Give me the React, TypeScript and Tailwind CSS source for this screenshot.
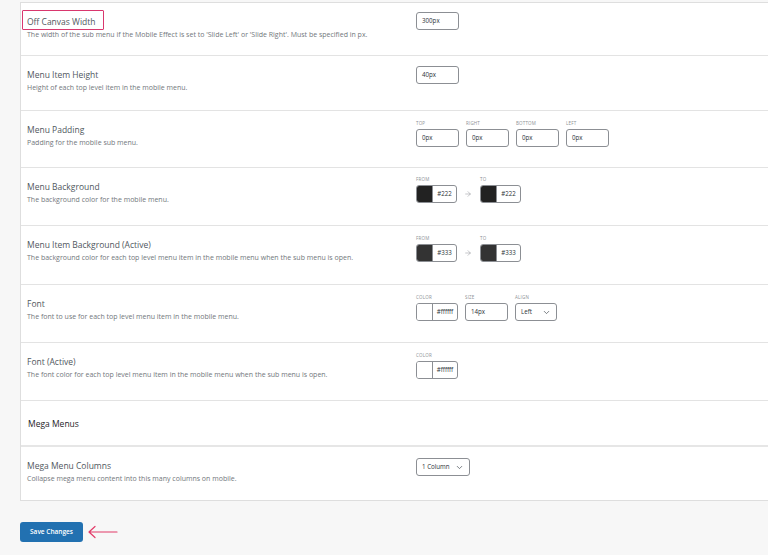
import { ArrowRight, ChevronDown } from 'lucide-react';
import type { ReactNode } from 'react';

function FieldLabel({ children }: { children: ReactNode }) {
  return (
    <div className="mb-[3px] h-[6px] text-[4.5px] leading-[6px] uppercase tracking-[0.04em] text-[#8c8f94]">
      {children}
    </div>
  );
}

function TextBox({ value, width = 'w-[43px]' }: { value: string; width?: string }) {
  return (
    <div
      className={`${width} flex h-[18px] items-center rounded-[3px] border border-[#8c8f94] bg-white px-[5px] text-[6.2px] leading-none text-[#2c3338]`}
    >
      {value}
    </div>
  );
}

function ColorBox({ color, value, wide = false }: { color: string; value: string; wide?: boolean }) {
  return (
    <div className="flex h-[18px] w-fit overflow-hidden rounded-[3px] border border-[#8c8f94] bg-white">
      <div className="w-[16px] border-r border-[#8c8f94]" style={{ backgroundColor: color }} />
      <div
        className={`${wide ? 'w-[24px]' : 'w-[23px]'} flex items-center justify-center text-[6.2px] leading-none text-[#2c3338]`}
      >
        {value}
      </div>
    </div>
  );
}

function SelectBox({ value, width }: { value: string; width: string }) {
  return (
    <div
      className={`${width} flex h-[18px] items-center justify-between rounded-[3px] border border-[#8c8f94] bg-white pl-[5px] pr-[5px] text-[6.2px] leading-none text-[#2c3338]`}
    >
      <span>{value}</span>
      <ChevronDown size={9} strokeWidth={2} className="text-[#50575e]" />
    </div>
  );
}

function Arrow() {
  return (
    <span className="flex h-[18px] w-[9px] items-center">
      <ArrowRight size={8} strokeWidth={1.5} className="text-[#8c8f94]" />
    </span>
  );
}

function Row({
  title,
  desc,
  height,
  right,
  rightPad,
  highlight,
  last,
}: {
  title: string;
  desc?: string;
  height: string;
  right?: ReactNode;
  rightPad: string;
  highlight?: boolean;
  last?: boolean;
}) {
  return (
    <div className={`flex ${height} ${last ? '' : 'border-b border-[#e3e3e3]'}`}>
      <div className="w-[395px] shrink-0 pl-[6px] pt-[13px]">
        <div className="relative w-fit text-[8.5px] leading-[11px] text-[#50575e]">
          {title}
          {highlight && (
            <span className="absolute -left-[5px] -right-[8px] -top-[6px] -bottom-[3px] rounded-[1px] border-[1.5px] border-[#d9376e]" />
          )}
        </div>
        {desc && <div className="mt-[3px] text-[7px] leading-[10px] text-[#72777c]">{desc}</div>}
      </div>
      <div className={`flex-1 ${rightPad}`}>{right}</div>
    </div>
  );
}

export default function App() {
  return (
    <div className="min-h-[555px] w-[768px] overflow-hidden bg-[#f7f7f7] pt-[2px] font-['Open_Sans','Noto_Sans',sans-serif]">
      {/* Settings table */}
      <div className="ml-[20px] border-b border-l border-t border-[#dedede] bg-white">
        <Row
          title="Off Canvas Width"
          desc="The width of the sub menu if the Mobile Effect is set to 'Slide Left' or 'Slide Right'. Must be specified in px."
          height="h-[53px]"
          rightPad="pt-[9px]"
          highlight
          right={<TextBox value="300px" />}
        />
        <Row
          title="Menu Item Height"
          desc="Height of each top level item in the mobile menu."
          height="h-[55px]"
          rightPad="pt-[10px]"
          right={<TextBox value="40px" />}
        />
        <Row
          title="Menu Padding"
          desc="Padding for the mobile sub menu."
          height="h-[57px]"
          rightPad="pt-[9px]"
          right={
            <div className="flex gap-[7px]">
              {['Top', 'Right', 'Bottom', 'Left'].map((l) => (
                <div key={l}>
                  <FieldLabel>{l}</FieldLabel>
                  <TextBox value="0px" />
                </div>
              ))}
            </div>
          }
        />
        <Row
          title="Menu Background"
          desc="The background color for the mobile menu."
          height="h-[58px]"
          rightPad="pt-[8px]"
          right={
            <div className="flex items-end gap-[7px]">
              <div>
                <FieldLabel>From</FieldLabel>
                <ColorBox color="#222222" value="#222" />
              </div>
              <Arrow />
              <div>
                <FieldLabel>To</FieldLabel>
                <ColorBox color="#222222" value="#222" />
              </div>
            </div>
          }
        />
        <Row
          title="Menu Item Background (Active)"
          desc="The background color for each top level menu item in the mobile menu when the sub menu is open."
          height="h-[59px]"
          rightPad="pt-[9px]"
          right={
            <div className="flex items-end gap-[7px]">
              <div>
                <FieldLabel>From</FieldLabel>
                <ColorBox color="#333333" value="#333" />
              </div>
              <Arrow />
              <div>
                <FieldLabel>To</FieldLabel>
                <ColorBox color="#333333" value="#333" />
              </div>
            </div>
          }
        />
        <Row
          title="Font"
          desc="The font to use for each top level menu item in the mobile menu."
          height="h-[58px]"
          rightPad="pt-[9px]"
          right={
            <div className="flex gap-[7px]">
              <div>
                <FieldLabel>Color</FieldLabel>
                <ColorBox color="#ffffff" value="#ffffff" wide />
              </div>
              <div>
                <FieldLabel>Size</FieldLabel>
                <TextBox value="14px" />
              </div>
              <div>
                <FieldLabel>Align</FieldLabel>
                <SelectBox value="Left" width="w-[42px]" />
              </div>
            </div>
          }
        />
        <Row
          title="Font (Active)"
          desc="The font color for each top level menu item in the mobile menu when the sub menu is open."
          height="h-[58px]"
          rightPad="pt-[9px]"
          right={
            <div>
              <FieldLabel>Color</FieldLabel>
              <ColorBox color="#ffffff" value="#ffffff" wide />
            </div>
          }
        />
        {/* Section heading */}
        <div className="flex h-[46px] items-center border-b-2 border-[#e6e6e6] pl-[7px] pt-[2px]">
          <span className="text-[8.5px] font-medium text-[#1d2327]">Mega Menus</span>
        </div>
        <Row
          title="Mega Menu Columns"
          desc="Collapse mega menu content into this many columns on mobile."
          height="h-[53px]"
          rightPad="pt-[11px]"
          last
          right={<SelectBox value="1 Column" width="w-[54px]" />}
        />
      </div>

      {/* Submit */}
      <div className="ml-[20px] mt-[21px] flex items-center">
        <button className="h-[20px] w-[63px] rounded-[3px] bg-[#2271b1] text-[6.5px] font-semibold text-white">
          Save Changes
        </button>
        <svg width="32" height="14" viewBox="0 0 32 14" className="ml-[4px]">
          <path d="M2 7 H30 M2 7 L8 1.5 M2 7 L8 12.5" fill="none" stroke="#e23a68" strokeWidth="1.2" strokeLinecap="round" />
        </svg>
      </div>
    </div>
  );
}
